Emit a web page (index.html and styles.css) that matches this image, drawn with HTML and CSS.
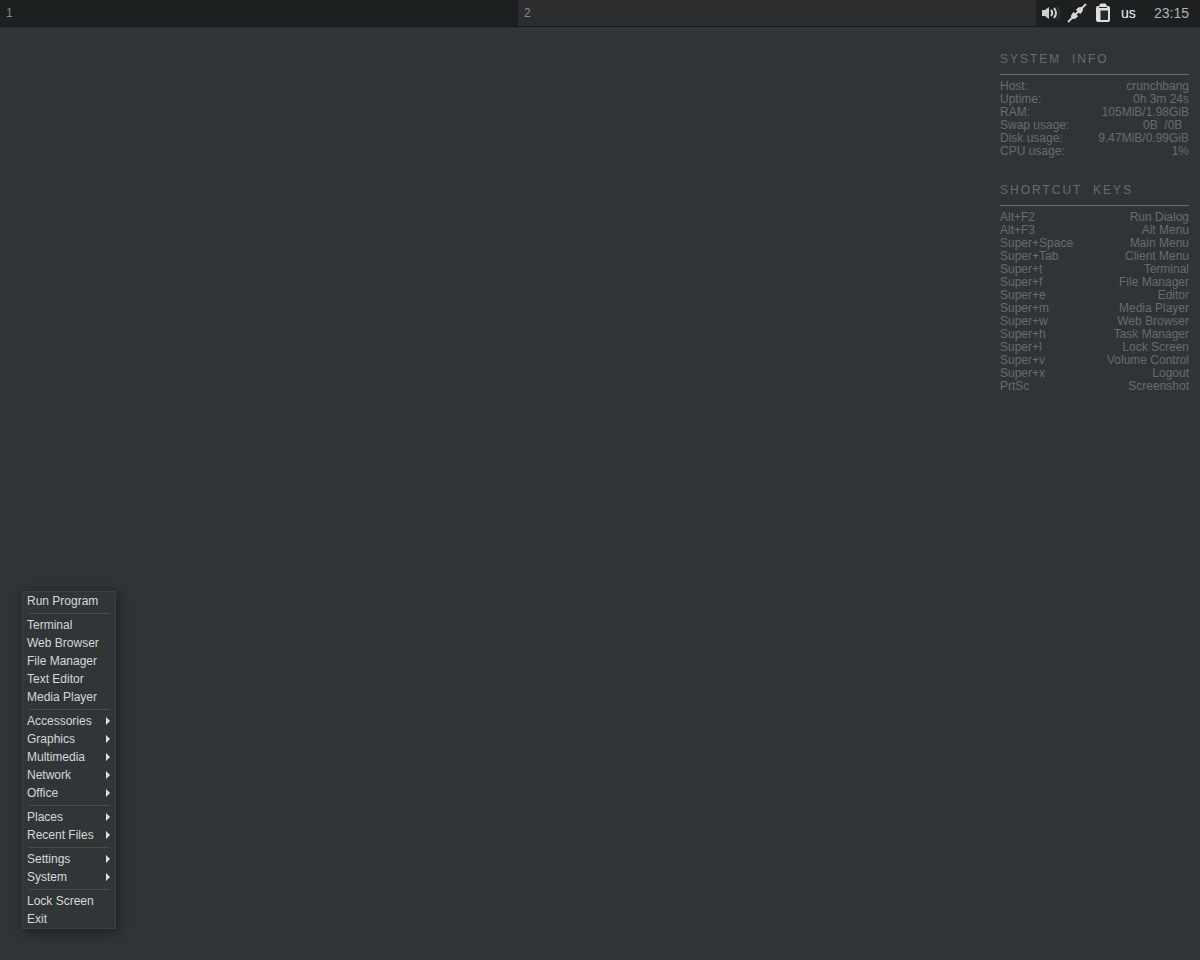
FILE: index.html
```html
<!DOCTYPE html>
<html lang="en">
<head>
    <meta charset="UTF-8">
    <meta name="viewport" content="width=device-width, initial-scale=1.0">
    <title>Desktop</title>
    <link rel="stylesheet" href="styles.css">
</head>
<body>

<!-- Top panel -->
<header class="panel">
    <div class="desktops">
        <button class="desktop-tab active">1</button>
        <button class="desktop-tab">2</button>
    </div>
    <div class="tray">
        <button class="tray-icon" aria-label="Volume">
            <svg width="20" height="20" viewBox="0 0 20 20">
                <path d="M1 7h3l4-3v12l-4-3H1z" fill="#cfd2d3"/>
                <path d="M10 7q2.500 3 0 6M13 5q4 5 0 10" fill="none" stroke="#cfd2d3" stroke-width="2"/>
                <path d="M16 3.500q5 6.500 0 13" fill="none" stroke="#34383a" stroke-width="1.500"/>
            </svg>
        </button>
        <button class="tray-icon" aria-label="Network">
            <svg width="20" height="20" viewBox="0 0 20 20">
                <path d="M1.500 18.500L18.500 1.500" stroke="#d4d6d7" stroke-width="1.800" stroke-linecap="round"/>
                <g transform="rotate(-45 10 10)" fill="#d4d6d7">
                    <path d="M2 10q1.500-3 4-3H8.500v6H6q-2.500 0-4-3z"/>
                    <path d="M11.500 7H14q2.500 0 4 3-1.500 3-4 3h-2.500z"/>
                </g>
            </svg>
        </button>
        <button class="tray-icon" aria-label="Clipboard">
            <svg width="20" height="20" viewBox="0 0 20 20">
                <path d="M5 3h1.500V2q0-1.500 1.500-1.500h4q1.500 0 1.500 1.500v1H15q2 0 2 2v12q0 2-2 2H5q-2 0-2-2V5q0-2 2-2z" fill="#dcdedf"/>
                <path d="M6 4.500h8" stroke="#25292b" stroke-width="1"/>
                <path d="M7.500 7.500H15v9.500H7.500z" fill="#25292b"/>
            </svg>
        </button>
        <button class="keyboard">us</button>
        <time class="clock">23:15</time>
    </div>
</header>

<main class="desktop">
    <!-- System monitor -->
    <aside class="monitor">
        <section>
            <h2>SYSTEM&nbsp; INFO</h2>
            <table>
                <tr><th scope="row">Host:</th><td>crunchbang</td></tr>
                <tr><th scope="row">Uptime:</th><td>0h 3m 24s</td></tr>
                <tr><th scope="row">RAM:</th><td>105MiB/1.98GiB</td></tr>
                <tr><th scope="row">Swap usage:</th><td>0B&nbsp; /0B&nbsp;&nbsp;</td></tr>
                <tr><th scope="row">Disk usage:</th><td>9.47MiB/0.99GiB</td></tr>
                <tr><th scope="row">CPU usage:</th><td>1%</td></tr>
            </table>
        </section>
        <section>
            <h2>SHORTCUT&nbsp; KEYS</h2>
            <table>
                <tr><th scope="row">Alt+F2</th><td>Run Dialog</td></tr>
                <tr><th scope="row">Alt+F3</th><td>Alt Menu</td></tr>
                <tr><th scope="row">Super+Space</th><td>Main Menu</td></tr>
                <tr><th scope="row">Super+Tab</th><td>Client Menu</td></tr>
                <tr><th scope="row">Super+t</th><td>Terminal</td></tr>
                <tr><th scope="row">Super+f</th><td>File Manager</td></tr>
                <tr><th scope="row">Super+e</th><td>Editor</td></tr>
                <tr><th scope="row">Super+m</th><td>Media Player</td></tr>
                <tr><th scope="row">Super+w</th><td>Web Browser</td></tr>
                <tr><th scope="row">Super+h</th><td>Task Manager</td></tr>
                <tr><th scope="row">Super+l</th><td>Lock Screen</td></tr>
                <tr><th scope="row">Super+v</th><td>Volume Control</td></tr>
                <tr><th scope="row">Super+x</th><td>Logout</td></tr>
                <tr><th scope="row">PrtSc</th><td>Screenshot</td></tr>
            </table>
        </section>
    </aside>

    <!-- Root menu -->
    <nav class="menu">
        <button class="item">Run Program</button>
        <hr>
        <button class="item">Terminal</button>
        <button class="item">Web Browser</button>
        <button class="item">File Manager</button>
        <button class="item">Text Editor</button>
        <button class="item">Media Player</button>
        <hr>
        <button class="item submenu">Accessories</button>
        <button class="item submenu">Graphics</button>
        <button class="item submenu">Multimedia</button>
        <button class="item submenu">Network</button>
        <button class="item submenu">Office</button>
        <hr>
        <button class="item submenu">Places</button>
        <button class="item submenu">Recent Files</button>
        <hr>
        <button class="item submenu">Settings</button>
        <button class="item submenu">System</button>
        <hr>
        <button class="item">Lock Screen</button>
        <button class="item">Exit</button>
    </nav>
</main>

</body>
</html>
```

FILE: styles.css
```css
* {
    box-sizing: border-box;
}

body {
    margin: 0;
    min-height: 100vh;
    display: flex;
    flex-direction: column;
    background-color: #2f3537;
    font-family: "Liberation Sans", Arial, sans-serif;
    font-size: 12px;
}

button {
    border: none;
    padding: 0;
    background: none;
    font: inherit;
    color: inherit;
    text-align: left;
}

/* Top panel */
.panel {
    display: flex;
    height: 27px;
    background-color: #1c2021;
    border-bottom: 1px solid #15191a;
}

.desktops {
    flex: 1;
    display: flex;
}

.desktop-tab {
    flex: 1;
    padding: 0 6px;
    background-color: #2c2d2f;
    color: #85888a;
}

.desktop-tab.active {
    background-color: #1c2021;
}

.tray {
    display: flex;
    align-items: center;
    padding: 0 11px 0 5px;
}

.tray-icon {
    display: flex;
    width: 26px;
    height: 20px;
}

.keyboard {
    width: 35px;
    padding-left: 2px;
    font-size: 14px;
    color: #f0f0f0;
}

.clock {
    font-size: 14px;
    color: #b0b3b4;
}

/* Desktop */
.desktop {
    flex: 1;
    position: relative;
}

.monitor {
    width: 189px;
    margin: 24px 11px 0 auto;
    color: #686b6b;
    line-height: 13px;
}

.monitor section {
    margin-bottom: 24px;
}

.monitor h2 {
    margin: 0 0 5px;
    padding: 2px 0 8px;
    border-bottom: 1px solid #686b6b;
    font-size: 12px;
    font-weight: normal;
    line-height: 13px;
    letter-spacing: 2px;
}

.monitor table {
    width: 100%;
    border-collapse: collapse;
}

.monitor th,
.monitor td {
    padding: 0;
    font-weight: normal;
    text-align: left;
}

.monitor td {
    text-align: right;
}

/* Root menu */
.menu {
    position: absolute;
    left: 22px;
    bottom: 31px;
    display: flex;
    flex-direction: column;
    min-width: 94px;
    border: 1px solid #3b4142;
    background-color: #303637;
    box-shadow: 2px 3px 12px rgba(0, 0, 0, 0.45);
    color: #d6d9d9;
}

.menu hr {
    margin: 3px 5px 2px 6px;
    border: none;
    height: 1px;
    background-color: #464c4e;
}

.item {
    display: flex;
    align-items: center;
    justify-content: space-between;
    height: 18px;
    padding: 0 5px 0 4px;
    font-size: 12px;
    white-space: nowrap;
}

.item:hover {
    background-color: #3b4142;
}

.submenu::after {
    content: "";
    border-left: 4px solid #e0e2e2;
    border-top: 4px solid transparent;
    border-bottom: 4px solid transparent;
}
```
